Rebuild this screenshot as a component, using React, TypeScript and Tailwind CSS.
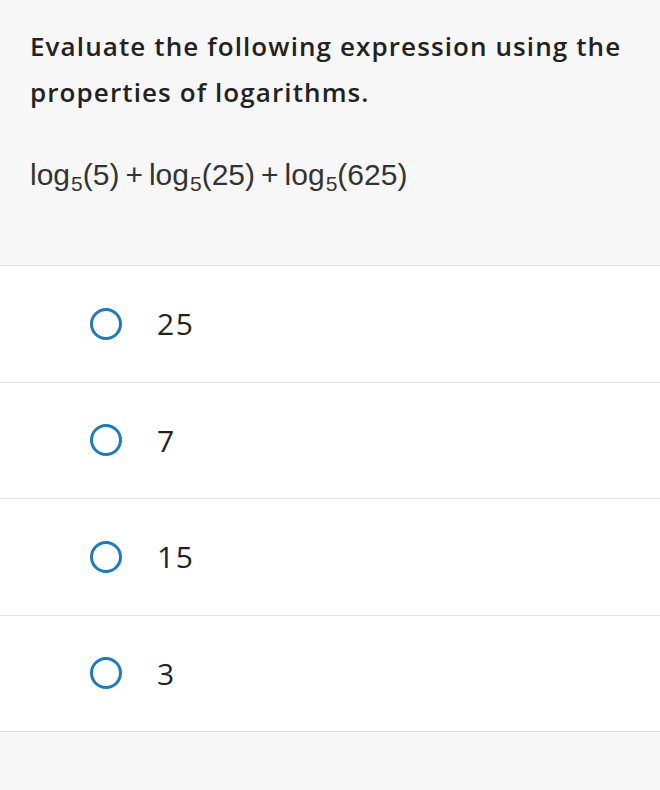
const options = ["25", "7", "15", "3"];

function Radio() {
  return (
    <svg width="34" height="34" viewBox="0 0 34 34" className="shrink-0">
      <circle cx="17" cy="17" r="14.5" fill="none" stroke="#1c7bc0" strokeWidth="3" />
    </svg>
  );
}

function Log({ arg }: { arg: string }) {
  return (
    <span>
      log<span className="text-[21px] relative top-[6px] ml-[1px]">5</span>({arg})
    </span>
  );
}

export default function App() {
  return (
    <div className="w-[660px] h-[790px] bg-[#f7f7f7] text-[#222]" style={{ fontFamily: "'Open Sans', Lato, sans-serif" }}>
      <div className="px-[30px] pt-[23px] h-[265px]">
        <p className="text-[26px] font-semibold leading-[46px] tracking-[1.1px]">
          Evaluate the following expression using the properties of logarithms.
        </p>
        <div
          className="mt-[40px] text-[30px] leading-[40px] text-[#333] flex items-baseline"
          style={{ fontFamily: "'Liberation Sans', Arial, sans-serif" }}
        >
          <Log arg="5" />
          <span className="mx-[6px]">+</span>
          <Log arg="25" />
          <span className="mx-[6px]">+</span>
          <Log arg="625" />
        </div>
      </div>
      <div className="bg-white border-t border-[#dcdcdc]">
        {options.map((o) => (
          <div key={o} className="h-[116.5px] border-b border-[#e4e4e4] last:border-[#d9d9d9] flex items-center pl-[89px]">
            <Radio />
            <span className="ml-[34px] text-[30px] tracking-[1.5px] text-[#222]">{o}</span>
          </div>
        ))}
      </div>
    </div>
  );
}
